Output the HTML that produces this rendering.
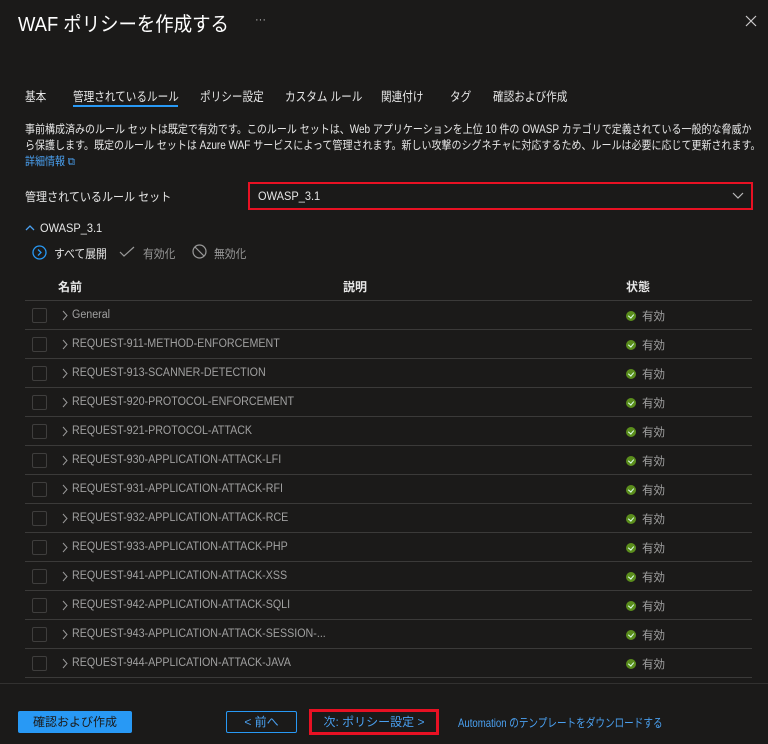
<!DOCTYPE html>
<html><head><meta charset="utf-8"><style>
*{margin:0;padding:0;box-sizing:border-box}
body{width:768px;height:744px;background:#1b1a19;color:#e6e6e6;font-family:"Liberation Sans","Noto Sans CJK JP",sans-serif;font-size:12px;position:relative;overflow:hidden}
.a{position:absolute;white-space:nowrap;transform-origin:0 0}
.tab{position:absolute;top:86px;font-size:12.5px;color:#e6e6e6;transform:scaleX(.85);transform-origin:0 0;white-space:nowrap}
.line{position:absolute;left:25px;width:727px;height:1px;background:#3b3a39}
.cb{position:absolute;left:32px;width:15px;height:15px;border:1px solid #3f3e3d;border-radius:2px}
.rt{position:absolute;left:62px;color:#a0a0a0;font-size:11.5px;transform:scaleX(.93)}
.st{position:absolute;left:626px;color:#a0a0a0;font-size:11.5px}
.dot{display:inline-block;width:10px;height:10px;border-radius:50%;background:#5b8e1c;vertical-align:-1px;margin-right:6px;position:relative}
.dot:after{content:"";position:absolute;left:3px;top:2px;width:3px;height:4px;border:solid #dfe;border-width:0 1.3px 1.3px 0;transform:rotate(40deg)}
</style></head><body>
<div class="a" style="left:18px;top:8px;font-size:20px;color:#fff;transform:scaleX(.92)">WAF ポリシーを作成する</div>
<div class="a" style="left:255px;top:14px;color:#bbb;font-size:11px">···</div>
<svg class="a" style="left:745px;top:15px" width="12" height="12" viewBox="0 0 12 12"><path d="M1 1L11 11M11 1L1 11" stroke="#ccc" stroke-width="1.2"/></svg>

<div class="tab" style="left:25px">基本</div>
<div class="tab" style="left:73px">管理されているルール</div>
<div class="a" style="left:73px;top:105px;width:105px;height:2px;background:#2899f5"></div>
<div class="tab" style="left:200px">ポリシー設定</div>
<div class="tab" style="left:285px">カスタム ルール</div>
<div class="tab" style="left:381px">関連付け</div>
<div class="tab" style="left:450px">タグ</div>
<div class="tab" style="left:493px">確認および作成</div>

<div class="a" style="left:25px;top:122px;font-size:11.5px;line-height:16px;color:#e6e6e6;transform:scaleX(.87)">事前構成済みのルール セットは既定で有効です。このルール セットは、Web アプリケーションを上位 10 件の OWASP カテゴリで定義されている一般的な脅威か<br>ら保護します。既定のルール セットは Azure WAF サービスによって管理されます。新しい攻撃のシグネチャに対応するため、ルールは必要に応じて更新されます。<br><span style="color:#4aa0f0">詳細情報 ⧉</span></div>

<div class="a" style="left:25px;top:188px;transform:scaleX(.92)">管理されているルール セット</div>
<div class="a" style="left:248px;top:182px;width:505px;height:28px;border:2px solid #e81123"></div>
<div class="a" style="left:258px;top:189px;transform:scaleX(.92)">OWASP_3.1</div>
<svg class="a" style="left:732px;top:192px" width="12" height="8" viewBox="0 0 12 8"><path d="M1 1L6 6L11 1" stroke="#bbb" stroke-width="1.2" fill="none"/></svg>

<svg class="a" style="left:25px;top:224px" width="10" height="7" viewBox="0 0 10 7"><path d="M1 6L5 2L9 6" stroke="#4aa0f0" stroke-width="1.3" fill="none"/></svg>
<div class="a" style="left:40px;top:221px;transform:scaleX(.92)">OWASP_3.1</div>
<svg class="a" style="left:32px;top:245px" width="15" height="15" viewBox="0 0 15 15"><circle cx="7.5" cy="7.5" r="6.5" stroke="#2899f5" stroke-width="1.3" fill="none"/><path d="M6 4.5L9 7.5L6 10.5" stroke="#2899f5" stroke-width="1.3" fill="none"/></svg>
<div class="a" style="left:54px;top:245px;transform:scaleX(.9)">すべて展開</div>
<svg class="a" style="left:119px;top:246px" width="16" height="12" viewBox="0 0 16 12"><path d="M1 6L5 10L15 1" stroke="#999" stroke-width="1.2" fill="none"/></svg>
<div class="a" style="left:143px;top:245px;color:#999;transform:scaleX(.9)">有効化</div>
<svg class="a" style="left:192px;top:244px" width="15" height="15" viewBox="0 0 15 15"><circle cx="7.5" cy="7.5" r="6.5" stroke="#999" stroke-width="1.2" fill="none"/><path d="M3 3L12 12" stroke="#999" stroke-width="1.2"/></svg>
<div class="a" style="left:214px;top:245px;color:#999;transform:scaleX(.9)">無効化</div>

<div class="a" style="left:58px;top:278px;font-weight:bold">名前</div>
<div class="a" style="left:343px;top:278px;font-weight:bold">説明</div>
<div class="a" style="left:626px;top:278px;font-weight:bold">状態</div>

<div id="rows"></div>
<script>
var n=["General","REQUEST-911-METHOD-ENFORCEMENT","REQUEST-913-SCANNER-DETECTION","REQUEST-920-PROTOCOL-ENFORCEMENT","REQUEST-921-PROTOCOL-ATTACK","REQUEST-930-APPLICATION-ATTACK-LFI","REQUEST-931-APPLICATION-ATTACK-RFI","REQUEST-932-APPLICATION-ATTACK-RCE","REQUEST-933-APPLICATION-ATTACK-PHP","REQUEST-941-APPLICATION-ATTACK-XSS","REQUEST-942-APPLICATION-ATTACK-SQLI","REQUEST-943-APPLICATION-ATTACK-SESSION-...","REQUEST-944-APPLICATION-ATTACK-JAVA"];
var h='<div class="line" style="top:300px"></div>';
for(var i=0;i<n.length;i++){var y=300+i*29;
h+='<div class="cb" style="top:'+(y+8)+'px"></div><svg class="a" style="left:62px;top:'+(y+10)+'px" width="6" height="11" viewBox="0 0 6 11"><path d="M1 1L5 5.5L1 10" stroke="#999" stroke-width="1" fill="none"/></svg><div class="a rt" style="left:72px;top:'+(y+9)+'px">'+n[i]+'</div><div class="a st" style="top:'+(y+8)+'px"><span class="dot"></span>有効</div><div class="line" style="top:'+(y+29)+'px"></div>';}
document.getElementById('rows').innerHTML=h;
</script>
<div class="a" style="left:0;top:683px;width:768px;height:1px;background:#323130"></div>

<div class="a" style="left:18px;top:711px;width:114px;height:22px;background:#2899f5;border-radius:2px;color:#1b1a19;text-align:center;line-height:22px">確認および作成</div>
<div class="a" style="left:226px;top:711px;width:71px;height:22px;border:1px solid #2899f5;border-radius:2px;color:#4aa0f0;text-align:center;line-height:20px">&lt; 前へ</div>
<div class="a" style="left:309px;top:709px;width:130px;height:26px;border:3px solid #e81123;color:#4aa0f0;text-align:center;line-height:20px">次: ポリシー設定 &gt;</div>
<div class="a" style="left:458px;top:714px;color:#4aa0f0;transform:scaleX(.8)">Automation のテンプレートをダウンロードする</div>
</body></html>
